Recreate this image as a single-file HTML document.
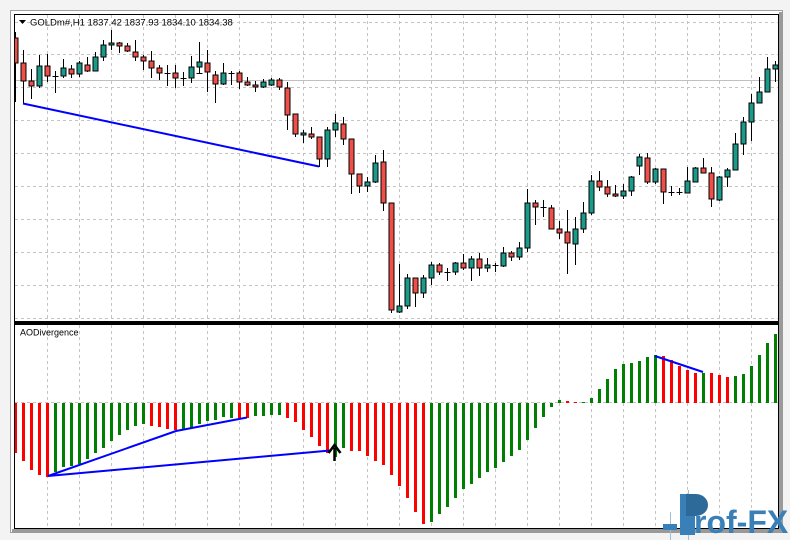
<!DOCTYPE html>
<html><head><meta charset="utf-8"><style>
html,body{margin:0;padding:0;background:#f3f3f3;}
body{width:790px;height:540px;overflow:hidden;position:relative;font-family:"Liberation Sans",sans-serif;}
svg{position:absolute;left:0;top:0;}
.r{fill:#ef4f48;stroke:#000;stroke-width:1}
.g{fill:#1b9a8a;stroke:#000;stroke-width:1}
</style></head><body>
<svg width="790" height="540" viewBox="0 0 790 540">
<rect x="10.5" y="10.5" width="772" height="522" fill="#fff" stroke="#a0a0a0"/>
<rect x="779" y="12" width="4" height="521" fill="#9a9a9a"/>
<rect x="12" y="529" width="771" height="4" fill="#9a9a9a"/>
<defs><clipPath id="c1"><rect x="15" y="15" width="763" height="307"/></clipPath>
<clipPath id="c2"><rect x="15" y="325" width="763" height="203"/></clipPath></defs>
<g clip-path="url(#c1)">
<g stroke="#c4c4c4" stroke-dasharray="3,3" fill="none">
<path d="M15 22.5H778M15 54.5H778M15 87.5H778M15 120.5H778M15 153.5H778M15 186.5H778M15 219.5H778M15 252.5H778M15 285.5H778M15 318.5H778"/>
<path d="M47.5 15V322M79.5 15V322M111.5 15V322M143.5 15V322M175.5 15V322M207.5 15V322M239.5 15V322M271.5 15V322M303.5 15V322M335.5 15V322M367.5 15V322M399.5 15V322M431.5 15V322M463.5 15V322M495.5 15V322M527.5 15V322M559.5 15V322M591.5 15V322M623.5 15V322M655.5 15V322M687.5 15V322M719.5 15V322M751.5 15V322"/>
</g>
<path d="M15 80.5H778" stroke="#c0c0c0"/>
<path stroke="#000" fill="none" d="M15.5 32V102M23.5 50V104M31.5 69V99M39.5 55V88M47.5 54V82M55.5 71V93M63.5 59V78M71.5 65V78M79.5 61V77M87.5 57V72M95.5 52V71M103.5 40V61M111.5 30V50M119.5 42V53M127.5 43V52M135.5 40V61M143.5 55V70M151.5 51V78M159.5 65V80M167.5 65V86M175.5 65V88M183.5 72V86M191.5 56V83M199.5 42V73M207.5 50V92M215.5 71V103M223.5 63V85M231.5 71V85M239.5 71V89M247.5 77V86M255.5 81V92M263.5 79V88M271.5 78V86M279.5 78V90M287.5 82V130M295.5 114V137M303.5 130V143M311.5 127V139M319.5 137V167M327.5 127V167M335.5 114V137M343.5 117V145M351.5 139V194M359.5 174V193M367.5 177V192M375.5 155V183M383.5 150V211M391.5 203V313M399.5 264V313M407.5 274V309M415.5 278V307M423.5 275V298M431.5 262V285M439.5 263V275M447.5 268V281M455.5 262V275M463.5 254V270M471.5 256V281M479.5 253V276M487.5 258V272M495.5 263V272M503.5 247V267M511.5 251V261M519.5 242V260M527.5 189V252M535.5 200V225M543.5 200V217M551.5 205V229M559.5 221V239M567.5 210V274M575.5 217V265M583.5 202V233M591.5 175V215M599.5 171V191M607.5 180V197M615.5 185V197M623.5 184V199M631.5 176V196M639.5 154V175M647.5 153V184M655.5 168V184M663.5 169V204M671.5 186V196M679.5 188V195M687.5 167V193M695.5 167V182M703.5 158V173M711.5 167V207M719.5 176V201M727.5 168V187M735.5 133V170M743.5 117V155M751.5 94V141M759.5 77V103M767.5 57V92M775.5 61V82
M52.5 76.5h6M164.5 73.5h6M180.5 78.5h6M196.5 73.5h6M228.5 73.5h6M444.5 272.5h6M492.5 265.5h6M540.5 207.5h6M668.5 192.5h6M676.5 192.5h6"/>
<rect class="r" x="13" y="38" width="5" height="25"/>
<rect class="r" x="21" y="63" width="5" height="18"/>
<rect class="r" x="29" y="81" width="5" height="5"/>
<rect class="g" x="37" y="66" width="5" height="20"/>
<rect class="r" x="45" y="66" width="5" height="10"/>
<rect class="g" x="61" y="68" width="5" height="8"/>
<rect class="r" x="69" y="69" width="5" height="5"/>
<rect class="g" x="77" y="63" width="5" height="11"/>
<rect class="r" x="85" y="65" width="5" height="6"/>
<rect class="g" x="93" y="57" width="5" height="14"/>
<rect class="g" x="101" y="45" width="5" height="12"/>
<rect class="g" x="109" y="43" width="5" height="2"/>
<rect class="r" x="117" y="43" width="5" height="3"/>
<rect class="r" x="125" y="46" width="5" height="5"/>
<rect class="r" x="133" y="52" width="5" height="5"/>
<rect class="r" x="141" y="57" width="5" height="4"/>
<rect class="r" x="149" y="61" width="5" height="7"/>
<rect class="r" x="157" y="68" width="5" height="5"/>
<rect class="r" x="173" y="73" width="5" height="5"/>
<rect class="g" x="189" y="67" width="5" height="11"/>
<rect class="g" x="197" y="62" width="5" height="5"/>
<rect class="r" x="205" y="63" width="5" height="9"/>
<rect class="r" x="213" y="75" width="5" height="9"/>
<rect class="g" x="221" y="73" width="5" height="11"/>
<rect class="r" x="237" y="73" width="5" height="9"/>
<rect class="r" x="245" y="82" width="5" height="3"/>
<rect class="r" x="253" y="85" width="5" height="2"/>
<rect class="g" x="261" y="82" width="5" height="5"/>
<rect class="g" x="269" y="80" width="5" height="5"/>
<rect class="r" x="277" y="80" width="5" height="7"/>
<rect class="r" x="285" y="88" width="5" height="27"/>
<rect class="r" x="293" y="114" width="5" height="20"/>
<rect class="g" x="301" y="133" width="5" height="2"/>
<rect class="r" x="309" y="134" width="5" height="3"/>
<rect class="r" x="317" y="137" width="5" height="22"/>
<rect class="g" x="325" y="130" width="5" height="29"/>
<rect class="g" x="333" y="123" width="5" height="7"/>
<rect class="r" x="341" y="124" width="5" height="15"/>
<rect class="r" x="349" y="139" width="5" height="35"/>
<rect class="r" x="357" y="174" width="5" height="12"/>
<rect class="g" x="365" y="182" width="5" height="4"/>
<rect class="g" x="373" y="163" width="5" height="19"/>
<rect class="r" x="381" y="162" width="5" height="41"/>
<rect class="r" x="389" y="203" width="5" height="107"/>
<rect class="g" x="397" y="306" width="5" height="6"/>
<rect class="g" x="405" y="278" width="5" height="28"/>
<rect class="r" x="413" y="278" width="5" height="15"/>
<rect class="g" x="421" y="278" width="5" height="15"/>
<rect class="g" x="429" y="265" width="5" height="13"/>
<rect class="r" x="437" y="265" width="5" height="7"/>
<rect class="g" x="453" y="263" width="5" height="9"/>
<rect class="r" x="461" y="263" width="5" height="5"/>
<rect class="g" x="469" y="259" width="5" height="9"/>
<rect class="r" x="477" y="259" width="5" height="9"/>
<rect class="g" x="485" y="265" width="5" height="3"/>
<rect class="g" x="501" y="253" width="5" height="13"/>
<rect class="r" x="509" y="253" width="5" height="4"/>
<rect class="g" x="517" y="248" width="5" height="9"/>
<rect class="g" x="525" y="203" width="5" height="45"/>
<rect class="r" x="533" y="203" width="5" height="4"/>
<rect class="r" x="549" y="208" width="5" height="21"/>
<rect class="r" x="557" y="229" width="5" height="4"/>
<rect class="r" x="565" y="232" width="5" height="11"/>
<rect class="g" x="573" y="229" width="5" height="15"/>
<rect class="g" x="581" y="213" width="5" height="16"/>
<rect class="g" x="589" y="181" width="5" height="32"/>
<rect class="r" x="597" y="181" width="5" height="6"/>
<rect class="r" x="605" y="187" width="5" height="7"/>
<rect class="r" x="613" y="194" width="5" height="2"/>
<rect class="g" x="621" y="191" width="5" height="5"/>
<rect class="g" x="629" y="177" width="5" height="14"/>
<rect class="g" x="637" y="157" width="5" height="9"/>
<rect class="r" x="645" y="158" width="5" height="24"/>
<rect class="g" x="653" y="169" width="5" height="13"/>
<rect class="r" x="661" y="169" width="5" height="23"/>
<rect class="g" x="685" y="181" width="5" height="12"/>
<rect class="g" x="693" y="168" width="5" height="14"/>
<rect class="r" x="701" y="168" width="5" height="5"/>
<rect class="r" x="709" y="173" width="5" height="26"/>
<rect class="g" x="717" y="177" width="5" height="23"/>
<rect class="g" x="725" y="170" width="5" height="7"/>
<rect class="g" x="733" y="144" width="5" height="26"/>
<rect class="g" x="741" y="122" width="5" height="22"/>
<rect class="g" x="749" y="103" width="5" height="19"/>
<rect class="g" x="757" y="92" width="5" height="11"/>
<rect class="g" x="765" y="69" width="5" height="23"/>
<rect class="g" x="773" y="65" width="5" height="4"/>
<path d="M23 103.5L319 166.5" stroke="#0000ff" stroke-width="2" fill="none"/>
</g>
<rect x="14.5" y="14.5" width="764" height="308" fill="none" stroke="#000"/>
<path d="M14 321.5H779M14 323.5H779" stroke="#000"/>
<path d="M19 20h7l-3.5 4z" fill="#000"/>
<text x="30" y="25.5" font-size="9.5" fill="#000" font-family="Liberation Sans, sans-serif">GOLDm#,H1  1837.42 1837.93 1834.10 1834.38</text>

<g clip-path="url(#c2)">
<g stroke="#c4c4c4" stroke-dasharray="3,3" fill="none">
<path d="M15 402.5H778"/>
<path d="M47.5 325V528M79.5 325V528M111.5 325V528M143.5 325V528M175.5 325V528M207.5 325V528M239.5 325V528M271.5 325V528M303.5 325V528M335.5 325V528M367.5 325V528M399.5 325V528M431.5 325V528M463.5 325V528M495.5 325V528M527.5 325V528M559.5 325V528M591.5 325V528M623.5 325V528M655.5 325V528M687.5 325V528M719.5 325V528M751.5 325V528"/>
</g>
<path stroke="#ff0000" stroke-width="3" fill="none" d="M15.5 403v50M23.5 403v58M31.5 403v67M39.5 403v72M47.5 403v74M151.5 403v23M159.5 403v24M167.5 403v26M175.5 403v27M239.5 403v15M247.5 403v15M287.5 403v15M295.5 403v19M303.5 403v27M311.5 403v34M319.5 403v43M327.5 403v50M351.5 403v48M359.5 403v48M367.5 403v53M375.5 403v58M383.5 403v62M391.5 403v72M399.5 403v83M407.5 403v95M415.5 403v109M423.5 403v121M567.5 403v-2M575.5 403v-1M663.5 403v-47M671.5 403v-43M679.5 403v-37M687.5 403v-33M695.5 403v-30M711.5 403v-30M719.5 403v-28M727.5 403v-26"/>
<path stroke="#008000" stroke-width="3" fill="none" d="M55.5 403v69M63.5 403v64M71.5 403v63M79.5 403v61M87.5 403v56M95.5 403v50M103.5 403v45M111.5 403v38M119.5 403v32M127.5 403v27M135.5 403v23M143.5 403v21M183.5 403v27M191.5 403v25M199.5 403v21M207.5 403v18M215.5 403v17M223.5 403v14M231.5 403v15M255.5 403v13M263.5 403v13M271.5 403v12M279.5 403v12M335.5 403v54M343.5 403v45M431.5 403v119M439.5 403v111M447.5 403v104M455.5 403v95M463.5 403v86M471.5 403v81M479.5 403v75M487.5 403v69M495.5 403v65M503.5 403v59M511.5 403v53M519.5 403v47M527.5 403v37M535.5 403v25M543.5 403v14M551.5 403v4M559.5 403v-3M583.5 403v-1M591.5 403v-5M599.5 403v-14M607.5 403v-24M615.5 403v-34M623.5 403v-39M631.5 403v-40M639.5 403v-42M647.5 403v-46M655.5 403v-48M703.5 403v-30M735.5 403v-27M743.5 403v-29M751.5 403v-37M759.5 403v-48M767.5 403v-60M775.5 403v-69"/>
<path d="M48 476L176 431L247 417.5M48 476L330 450.5M655 356L703 372" stroke="#0000ff" stroke-width="2" fill="none"/>
<path d="M334.5 461V448M328.5 453L334.5 445L340.5 453" stroke="#000" stroke-width="2.5" fill="none"/>
</g>
<rect x="14.5" y="324.5" width="764" height="204" fill="none" stroke="#000"/>
<text x="20" y="335.5" font-size="9" fill="#000" font-family="Liberation Sans, sans-serif">AODivergence</text>
<g fill="#3a80b8">
<path d="M670.5 512V540M688.5 490V540" stroke="#9fbfd8" stroke-width="1"/>
<rect x="680" y="494" width="15" height="41"/>
<path d="M686 494h10a12 11 0 0 1 0 22h-10z" fill="#2d6a9a"/>
<rect x="663" y="524" width="14" height="6"/>
<text x="694" y="533" font-size="32" font-weight="bold" font-family="Liberation Sans, sans-serif">rof-FX</text>
</g>
</svg>
</body></html>
